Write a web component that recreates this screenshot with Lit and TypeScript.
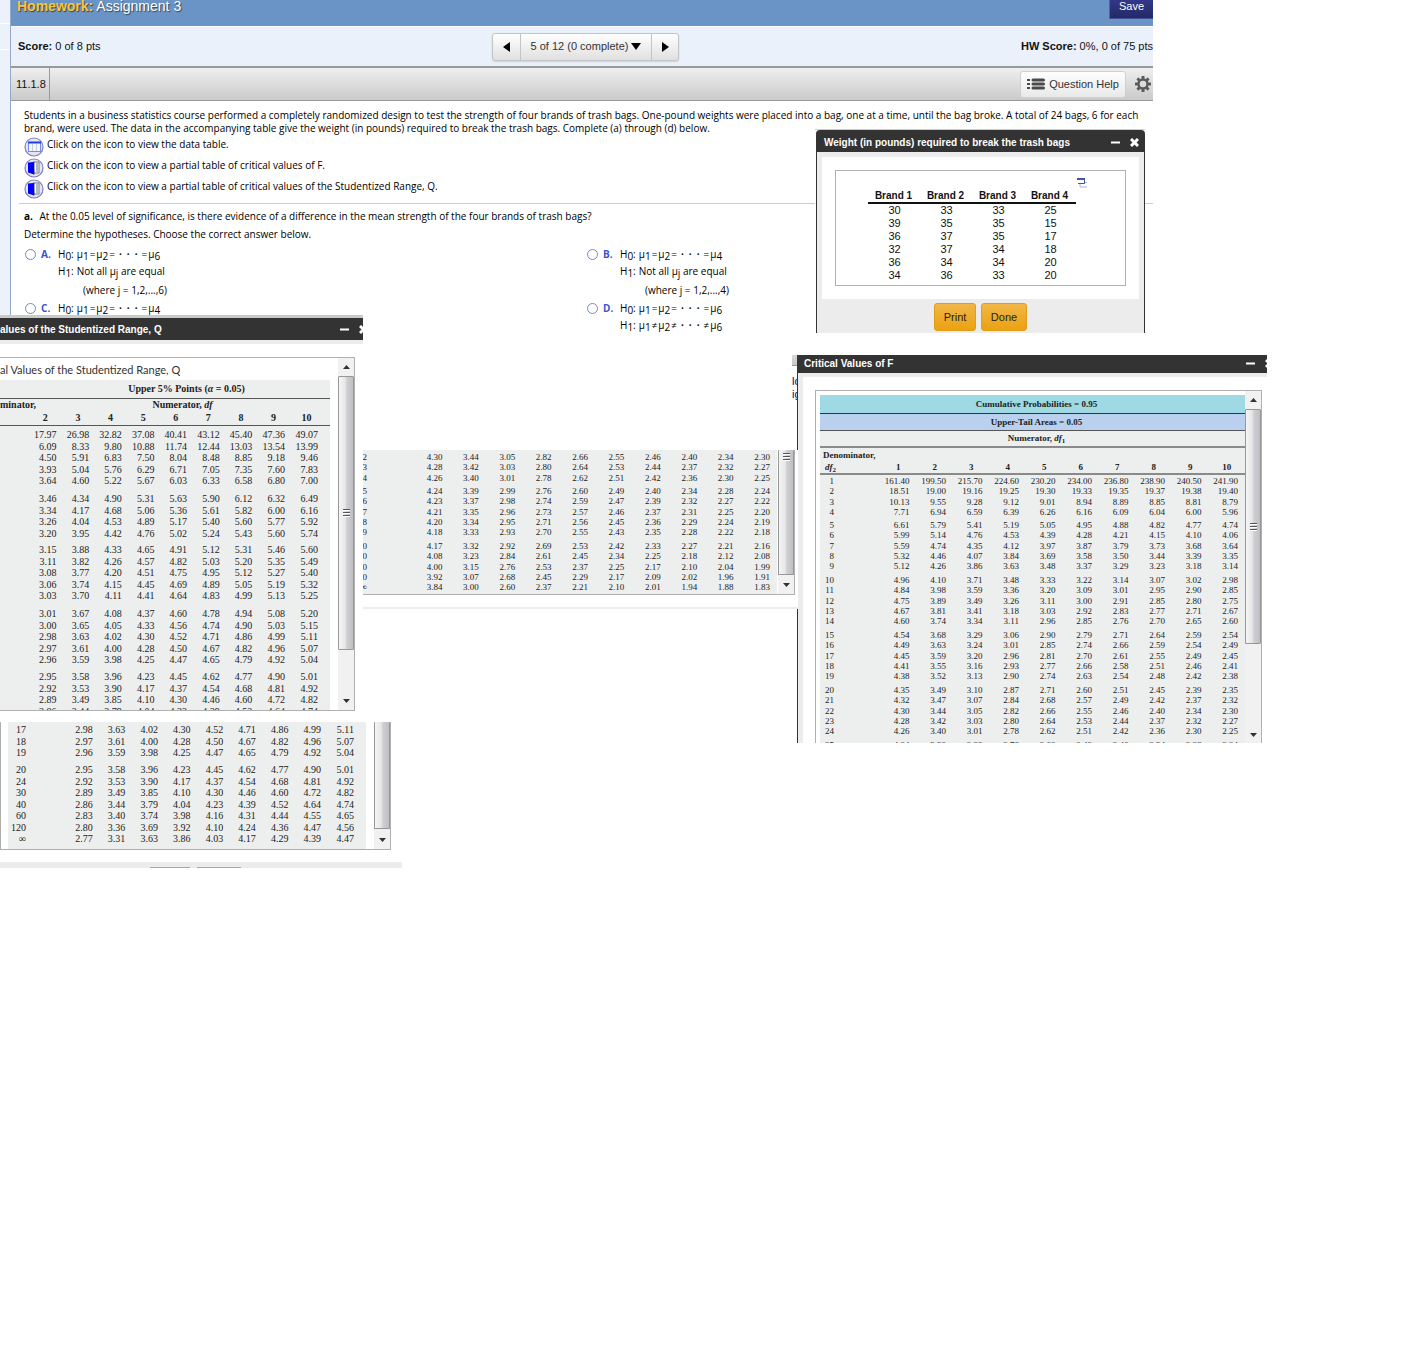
import { LitElement, html, css, svg, nothing } from "lit";
import { customElement, property } from "lit/decorators.js";

type Group = { label: string; values: string }[];

const group = (text: string): Group =>
  text
    .trim()
    .split("\n")
    .map((line) => {
      const [label, values] = line.trim().split("|");
      return { label, values };
    });

const WEIGHTS = [
  [30, 33, 33, 25],
  [39, 35, 35, 15],
  [36, 37, 35, 17],
  [32, 37, 34, 18],
  [36, 34, 34, 20],
  [34, 36, 33, 20],
];

const Q_TOP: Group[] = [
  group(`|17.97 26.98 32.82 37.08 40.41 43.12 45.40 47.36 49.07
    |6.09 8.33 9.80 10.88 11.74 12.44 13.03 13.54 13.99
    |4.50 5.91 6.83 7.50 8.04 8.48 8.85 9.18 9.46
    |3.93 5.04 5.76 6.29 6.71 7.05 7.35 7.60 7.83
    |3.64 4.60 5.22 5.67 6.03 6.33 6.58 6.80 7.00`),
  group(`|3.46 4.34 4.90 5.31 5.63 5.90 6.12 6.32 6.49
    |3.34 4.17 4.68 5.06 5.36 5.61 5.82 6.00 6.16
    |3.26 4.04 4.53 4.89 5.17 5.40 5.60 5.77 5.92
    |3.20 3.95 4.42 4.76 5.02 5.24 5.43 5.60 5.74`),
  group(`|3.15 3.88 4.33 4.65 4.91 5.12 5.31 5.46 5.60
    |3.11 3.82 4.26 4.57 4.82 5.03 5.20 5.35 5.49
    |3.08 3.77 4.20 4.51 4.75 4.95 5.12 5.27 5.40
    |3.06 3.74 4.15 4.45 4.69 4.89 5.05 5.19 5.32
    |3.03 3.70 4.11 4.41 4.64 4.83 4.99 5.13 5.25`),
  group(`|3.01 3.67 4.08 4.37 4.60 4.78 4.94 5.08 5.20
    |3.00 3.65 4.05 4.33 4.56 4.74 4.90 5.03 5.15
    |2.98 3.63 4.02 4.30 4.52 4.71 4.86 4.99 5.11
    |2.97 3.61 4.00 4.28 4.50 4.67 4.82 4.96 5.07
    |2.96 3.59 3.98 4.25 4.47 4.65 4.79 4.92 5.04`),
  group(`|2.95 3.58 3.96 4.23 4.45 4.62 4.77 4.90 5.01
    |2.92 3.53 3.90 4.17 4.37 4.54 4.68 4.81 4.92
    |2.89 3.49 3.85 4.10 4.30 4.46 4.60 4.72 4.82
    |2.86 3.44 3.79 4.04 4.23 4.39 4.52 4.64 4.74`),
];

const Q_BOTTOM: Group[] = [
  group(`17|2.98 3.63 4.02 4.30 4.52 4.71 4.86 4.99 5.11
    18|2.97 3.61 4.00 4.28 4.50 4.67 4.82 4.96 5.07
    19|2.96 3.59 3.98 4.25 4.47 4.65 4.79 4.92 5.04`),
  group(`20|2.95 3.58 3.96 4.23 4.45 4.62 4.77 4.90 5.01
    24|2.92 3.53 3.90 4.17 4.37 4.54 4.68 4.81 4.92
    30|2.89 3.49 3.85 4.10 4.30 4.46 4.60 4.72 4.82
    40|2.86 3.44 3.79 4.04 4.23 4.39 4.52 4.64 4.74
    60|2.83 3.40 3.74 3.98 4.16 4.31 4.44 4.55 4.65
    120|2.80 3.36 3.69 3.92 4.10 4.24 4.36 4.47 4.56
    ∞|2.77 3.31 3.63 3.86 4.03 4.17 4.29 4.39 4.47`),
];

const F_TOP: Group[] = [
  group(`1|161.40 199.50 215.70 224.60 230.20 234.00 236.80 238.90 240.50 241.90
    2|18.51 19.00 19.16 19.25 19.30 19.33 19.35 19.37 19.38 19.40
    3|10.13 9.55 9.28 9.12 9.01 8.94 8.89 8.85 8.81 8.79
    4|7.71 6.94 6.59 6.39 6.26 6.16 6.09 6.04 6.00 5.96`),
  group(`5|6.61 5.79 5.41 5.19 5.05 4.95 4.88 4.82 4.77 4.74
    6|5.99 5.14 4.76 4.53 4.39 4.28 4.21 4.15 4.10 4.06
    7|5.59 4.74 4.35 4.12 3.97 3.87 3.79 3.73 3.68 3.64
    8|5.32 4.46 4.07 3.84 3.69 3.58 3.50 3.44 3.39 3.35
    9|5.12 4.26 3.86 3.63 3.48 3.37 3.29 3.23 3.18 3.14`),
  group(`10|4.96 4.10 3.71 3.48 3.33 3.22 3.14 3.07 3.02 2.98
    11|4.84 3.98 3.59 3.36 3.20 3.09 3.01 2.95 2.90 2.85
    12|4.75 3.89 3.49 3.26 3.11 3.00 2.91 2.85 2.80 2.75
    13|4.67 3.81 3.41 3.18 3.03 2.92 2.83 2.77 2.71 2.67
    14|4.60 3.74 3.34 3.11 2.96 2.85 2.76 2.70 2.65 2.60`),
  group(`15|4.54 3.68 3.29 3.06 2.90 2.79 2.71 2.64 2.59 2.54
    16|4.49 3.63 3.24 3.01 2.85 2.74 2.66 2.59 2.54 2.49
    17|4.45 3.59 3.20 2.96 2.81 2.70 2.61 2.55 2.49 2.45
    18|4.41 3.55 3.16 2.93 2.77 2.66 2.58 2.51 2.46 2.41
    19|4.38 3.52 3.13 2.90 2.74 2.63 2.54 2.48 2.42 2.38`),
  group(`20|4.35 3.49 3.10 2.87 2.71 2.60 2.51 2.45 2.39 2.35
    21|4.32 3.47 3.07 2.84 2.68 2.57 2.49 2.42 2.37 2.32
    22|4.30 3.44 3.05 2.82 2.66 2.55 2.46 2.40 2.34 2.30
    23|4.28 3.42 3.03 2.80 2.64 2.53 2.44 2.37 2.32 2.27
    24|4.26 3.40 3.01 2.78 2.62 2.51 2.42 2.36 2.30 2.25`),
  group(`25|4.24 3.39 2.99 2.76 2.60 2.49 2.40 2.34 2.28 2.24`),
];

const F_BOTTOM: Group[] = [
  group(`22|4.30 3.44 3.05 2.82 2.66 2.55 2.46 2.40 2.34 2.30
    23|4.28 3.42 3.03 2.80 2.64 2.53 2.44 2.37 2.32 2.27
    24|4.26 3.40 3.01 2.78 2.62 2.51 2.42 2.36 2.30 2.25`),
  group(`25|4.24 3.39 2.99 2.76 2.60 2.49 2.40 2.34 2.28 2.24
    26|4.23 3.37 2.98 2.74 2.59 2.47 2.39 2.32 2.27 2.22
    27|4.21 3.35 2.96 2.73 2.57 2.46 2.37 2.31 2.25 2.20
    28|4.20 3.34 2.95 2.71 2.56 2.45 2.36 2.29 2.24 2.19
    29|4.18 3.33 2.93 2.70 2.55 2.43 2.35 2.28 2.22 2.18`),
  group(`30|4.17 3.32 2.92 2.69 2.53 2.42 2.33 2.27 2.21 2.16
    40|4.08 3.23 2.84 2.61 2.45 2.34 2.25 2.18 2.12 2.08
    60|4.00 3.15 2.76 2.53 2.37 2.25 2.17 2.10 2.04 1.99
    120|3.92 3.07 2.68 2.45 2.29 2.17 2.09 2.02 1.96 1.91
    ∞|3.84 3.00 2.60 2.37 2.21 2.10 2.01 1.94 1.88 1.83`),
];

/** Vertical scroll rail with arrows, thumb and grip. */
@customElement("scroll-rail")
export class ScrollRail extends LitElement {
  @property({ type: Number }) thumb = 100;
  @property() grip: "middle" | "start" | "none" = "middle";
  @property({ type: Boolean }) up = false;

  static styles = css`
    :host {
      display: flex;
      flex-direction: column;
      flex: none;
      width: 16px;
      box-sizing: border-box;
      background: #f1f1f1;
    }
    .arrow {
      display: flex;
      align-items: center;
      justify-content: center;
      flex: none;
      height: 18px;
    }
    .thumb {
      display: flex;
      justify-content: center;
      align-items: center;
      flex: none;
      box-sizing: border-box;
      border: 1px solid #979797;
      border-radius: 1px;
      background: linear-gradient(90deg, #f5f5f5 0%, #e6e6e8 45%, #d0d0d3 55%, #bfbfc3 100%);
    }
    .thumb.start {
      align-items: flex-start;
      border-top: 0;
      padding-top: 3px;
    }
    .thumb.none {
      border-top: 0;
    }
    .fill {
      flex: 1;
    }
    svg {
      display: block;
    }
  `;

  render() {
    return html`
      ${this.up
        ? html`<div class="arrow">
            <svg width="7" height="4" viewBox="0 0 7 4"><path d="M0 4 3.5 0 7 4Z" fill="#333" /></svg>
          </div>`
        : nothing}
      <div class="thumb ${this.grip}" style="height:${this.thumb}px">
        ${this.grip === "none"
          ? nothing
          : html`<svg width="7" height="8" viewBox="0 0 7 8">
              <path d="M0 .5H7M0 3.5H7M0 6.5H7" stroke="#555" />
              <path d="M0 1.5H7M0 4.5H7M0 7.5H7" stroke="#fff" />
            </svg>`}
      </div>
      <div class="fill"></div>
      <div class="arrow">
        <svg width="7" height="4" viewBox="0 0 7 4"><path d="M0 0H7L3.5 4Z" fill="#333" /></svg>
      </div>
    `;
  }
}

const tableIcon = html`<svg class="round" width="20" height="20" viewBox="0 0 20 20">
  <circle cx="10" cy="10" r="9" fill="#e6e6f2" stroke="#8080bb" stroke-width="1.2" />
  <rect x="4.5" y="5.5" width="12" height="9" fill="#f4f6ff" stroke="#6f8ff0" />
  <path d="M4 5.500H17" stroke="#1f3fe0" stroke-width="2" />
  <path d="M8.500 7V14M12.500 7V14" stroke="#ccd" />
</svg>`;

const bookIcon = html`<svg class="round" width="20" height="20" viewBox="0 0 20 20">
  <circle cx="10" cy="10" r="9" fill="#e6e6f2" stroke="#8080bb" stroke-width="1.2" />
  <path d="M9 4H15V15H10Z" fill="#fff" stroke="#778" stroke-width="1" />
  <path d="M13 5V14" stroke="#a9bccb" stroke-width="2" />
  <path d="M4 4.500 10 4V16.500L4 14.500Z" fill="#00f" />
  <path d="M10 4V16.500" stroke="#224" stroke-width=".8" />
</svg>`;

const minimize = html`<svg width="9" height="9" viewBox="0 0 9 9"><path d="M0 4.500H9" stroke="#fff" stroke-width="2" /></svg>`;
const close = html`<svg width="9" height="9" viewBox="0 0 9 9"><path d="M1 1 8 8M8 1 1 8" stroke="#fff" stroke-width="3" /></svg>`;

const gearTeeth = [0, 45, 90, 135, 180, 225, 270, 315].map(
  (a) => svg`<rect x="6.5" y="0" width="3" height="4" rx=".6" fill="#5b5b5b" transform="rotate(${a} 8 8)" />`
);

const dots = html`<span class="dots"><b>·</b><b>·</b><b>·</b></span>`;
const mu = (s: string) => html`<span>µ<sub>${s}</sub></span>`;
const h = (s: string) => html`<span class="hyp">H<sub>${s}</sub>:</span>`;

@customElement("app-root")
export class AppRoot extends LitElement {
  static styles = css`
    :host {
      display: block;
      position: relative;
      min-height: 100vh;
      overflow: hidden;
      background: #fff;
      color: #111;
      font: 11px/13px "Liberation Sans", Arial, sans-serif;
    }
    * {
      box-sizing: border-box;
    }
    button {
      font: inherit;
      color: inherit;
      margin: 0;
      padding: 0;
      border: 0;
      background: none;
    }
    svg {
      display: block;
      flex: none;
    }
    table {
      border-collapse: collapse;
      border-spacing: 0;
    }
    th,
    td {
      padding: 0;
    }

    /* assignment page */
    .page {
      display: flex;
      width: 100%;
      max-width: 1153px;
      overflow: hidden;
      white-space: nowrap;
    }
    .rail {
      flex: none;
      width: 11px;
      background: #ecf1fa;
      border-right: 1px solid #93a9cb;
    }
    .rail i {
      display: block;
      height: 24px;
      border-bottom: 1px solid #fff;
    }
    .rail i + i {
      height: 26px;
    }
    .main {
      flex: 1;
      min-width: 0;
    }
    .bar {
      display: flex;
      justify-content: space-between;
      align-items: flex-start;
      height: 27px;
      padding-left: 6px;
      background: #6a94c6;
      border-bottom: 1px solid #fff;
      color: #fff;
    }
    .bar h1 {
      margin: 0;
      font-size: 14px;
      line-height: 13px;
      font-weight: 400;
      text-shadow: 1px 1px 1px #345;
    }
    .bar h1 b {
      color: #fbc53b;
    }
    .save {
      width: 44px;
      height: 19px;
      padding-bottom: 6px;
      background: linear-gradient(#313889, #232a66);
      border-left: 1px solid #5360a8;
      border-bottom: 1px solid #4350a0;
      font-size: 11px;
      color: #fff;
    }
    .score {
      display: grid;
      grid-template-columns: 1fr auto 1fr;
      align-items: center;
      height: 39px;
      padding-left: 7px;
      background: #eaf1fb;
    }
    .score p {
      margin: 0;
    }
    .score p:last-child {
      text-align: right;
    }
    .pager {
      display: flex;
      height: 28px;
      border: 1px solid #c4c4c4;
      border-radius: 3px;
      background: linear-gradient(#fff, #e0e0e0);
      box-shadow: 0 1px 2px #0002;
      color: #333;
    }
    .pager button {
      display: flex;
      align-items: center;
      justify-content: center;
      gap: 3px;
      width: 27px;
    }
    .pager button + button {
      border-left: 1px solid #c4c4c4;
    }
    .pager .pick {
      width: 131px;
    }
    .tools {
      display: flex;
      align-items: center;
      height: 35px;
      border-top: 2px solid #999;
      border-bottom: 1px solid #999;
      background: linear-gradient(#efefef, #cacaca);
    }
    .number {
      align-self: stretch;
      width: 39px;
      padding: 10px 0 0 5px;
      border-right: 1px solid #999;
    }
    .help {
      display: flex;
      align-items: center;
      justify-content: center;
      gap: 4px;
      width: 106px;
      height: 27px;
      margin-left: auto;
      border: 1px solid #d0d0d0;
      border-radius: 3px;
      background: linear-gradient(#fefefe, #e9e9e9);
      color: #333;
    }
    .gear {
      width: 16px;
      margin: 0 2px 0 9px;
    }
    .text,
    .question,
    .choices {
      font-family: "Open Sans", "Noto Sans", sans-serif;
      font-size: 10px;
      color: #000;
    }
    .text {
      padding: 8px 0 0 13px;
    }
    .text p {
      margin: 0;
    }
    .links {
      display: flex;
      flex-direction: column;
      align-items: flex-start;
      gap: 1px;
      padding-top: 1px;
    }
    .links a {
      display: flex;
      gap: 3px;
      height: 20px;
      color: inherit;
      text-decoration: none;
      line-height: 17px;
    }
    .round {
      margin-top: 1px;
    }
    .rule {
      height: 1px;
      margin: 5px 0 6px 8px;
      background: #ccc;
    }
    .question {
      display: flex;
      flex-direction: column;
      gap: 5px;
      padding-left: 13px;
    }
    .question p {
      margin: 0;
    }
    .question p b {
      margin-right: 4px;
    }
    .choices {
      display: grid;
      grid-template-columns: 562px 1fr;
      padding: 5px 0 0 13px;
    }
    .choice {
      display: flex;
      align-items: flex-start;
      height: 54px;
      line-height: 17px;
    }
    .choice input {
      appearance: none;
      width: 11px;
      height: 11px;
      margin: 3px 5px 0 1px;
      border: 1px solid #7088d8;
      border-radius: 50%;
      background: #fff;
    }
    .choice b.key {
      width: 17px;
      color: #3a53d0;
    }
    .choice .where {
      display: block;
      padding-left: 25px;
      line-height: 20px;
    }
    .line {
      display: flex;
      gap: 1px;
    }
    .hyp {
      margin-right: 2px;
    }
    sub {
      font-size: 10px;
      line-height: 0;
      vertical-align: -2px;
    }
    .dots {
      display: inline-flex;
      gap: 5px;
      padding: 0 3px;
    }

    /* floating windows */
    .win {
      position: absolute;
      overflow: hidden;
      background: #fff;
      white-space: nowrap;
    }
    .title {
      display: flex;
      align-items: center;
      gap: 10px;
      background: #333;
      color: #fff;
      font-size: 10px;
      font-weight: 700;
    }
    .title span {
      flex: 1;
    }
    .title button {
      width: 9px;
      height: 9px;
    }

    .weights {
      left: 815px;
      top: 129px;
      width: 330px;
      height: 204px;
      border-top: 1px solid #ccc;
      padding-left: 1px;
    }
    .weights .title {
      height: 22px;
      padding: 3px 6px 0 8px;
      border-radius: 4px 4px 0 0;
    }
    .weights .body {
      display: flex;
      flex-direction: column;
      padding: 5px;
      height: 182px;
      border: solid #333;
      border-width: 0 1px;
      background: #ececec;
    }
    .sheet {
      padding: 13px;
      background: #fff;
    }
    .box {
      display: flex;
      flex-direction: column;
      align-items: center;
      height: 116px;
      padding-top: 7px;
      border: 1px solid #b0b0b0;
    }
    .popout {
      align-self: flex-end;
      margin-right: 38px;
    }
    .box table {
      width: 208px;
      margin: 1px 18px 0 0;
      table-layout: fixed;
      text-align: center;
    }
    .box thead th {
      height: 14px;
      border-bottom: 2px solid #111;
      font-size: 10px;
    }
    .box td {
      padding-left: 2px;
    }
    .actions {
      display: flex;
      justify-content: center;
      gap: 5px;
      padding: 4px 0 0 0;
    }
    .actions button {
      width: 46px;
      height: 28px;
      border: 1px solid #e29d18;
      border-radius: 3px;
      background: linear-gradient(#f2b648, #eba211);
      color: #222;
    }
    .actions button:first-child {
      width: 42px;
    }

    /* statistical tables */
    .stat {
      width: 100%;
      table-layout: fixed;
      background: #edefee;
      color: #222;
      font-family: "Liberation Serif", "Times New Roman", serif;
      text-align: right;
    }
    .stat thead th {
      text-align: center;
    }
    .q {
      font-size: 10px;
      line-height: 11px;
    }
    .q td {
      padding-right: 5px;
    }
    .q .n:last-child {
      padding-right: 7px;
    }
    .q td:last-child {
      padding-right: 12px;
    }
    .q tbody tr:nth-child(odd) {
      line-height: 12px;
    }
    .q tbody + tbody tr:first-child > * {
      padding-top: 5px;
    }
    .q tbody th {
      font-weight: 400;
      padding-right: 39px;
    }
    .f {
      font-size: 9px;
      line-height: 10px;
    }
    .f td {
      padding-right: 7px;
    }
    .f tbody tr:nth-child(3n + 2) {
      line-height: 11px;
    }
    .f tbody + tbody tr:first-child > * {
      padding-top: 3px;
    }
    .f tbody th {
      font-weight: 400;
      padding-right: 46px;
    }
    .lined > * {
      border-bottom: 1px solid #555;
    }
    .frame {
      display: flex;
      overflow: hidden;
      border: 1px solid #b0b0b0;
    }
    .pane {
      flex: 1;
      min-width: 0;
    }

    .range {
      left: 0;
      top: 315px;
      width: 363px;
      height: 400px;
      border-top: 3px solid #c9cbca;
    }
    .range .title {
      height: 22px;
      margin-right: -5px;
    }
    .edge {
      height: 4px;
      background: #ececec;
    }
    .range .frame {
      height: 354px;
      margin: 13px 8px 0 0;
      border-left: 0;
    }
    .range h2 {
      margin: 0;
      height: 22px;
      font: 400 11px/24px Lato, "Open Sans", sans-serif;
      color: #333;
    }
    .range .stat {
      width: calc(100% - 8px);
    }
    .range .top th {
      height: 18px;
      padding-left: 14px;
    }
    .range .mid th {
      height: 13px;
      padding-left: 6px;
    }
    .range .mid th:first-child {
      padding-left: 0;
      text-align: left;
    }
    .range .nums th {
      height: 14px;
    }
    .range tbody:first-of-type tr:first-child td {
      padding-top: 3px;
    }
    .range tbody:nth-of-type(even) tr:first-child td {
      padding-top: 6px;
    }

    .tail {
      left: 0;
      top: 722px;
      width: 402px;
      height: 146px;
    }
    .tail .frame {
      width: 391px;
      height: 128px;
      border-top: 0;
      padding-left: 7px;
    }
    .tail .stat {
      width: calc(100% - 8px);
    }
    .tail .pane {
      background: linear-gradient(90deg, #edefee calc(100% - 8px), #fff 0);
    }
    .tail tbody:first-of-type tr:first-child > * {
      padding-top: 2px;
    }
    .strip {
      display: flex;
      align-items: flex-end;
      gap: 7px;
      height: 6px;
      margin-top: 12px;
      padding-left: 150px;
      background: #ececec;
    }
    .strip i {
      width: 40px;
      height: 1px;
      background: #e2a32d;
    }
    .strip i + i {
      width: 44px;
    }

    .fcrit {
      left: 797px;
      top: 355px;
      width: 470px;
      height: 388px;
    }
    .fcrit .title {
      height: 18px;
      padding-left: 7px;
      padding-bottom: 2px;
      margin-right: -7px;
    }
    .fcrit .side {
      height: 370px;
      border-left: 1px solid #333;
      padding-left: 5px;
      background: linear-gradient(90deg, #ececec 5px, #fff 5px);
    }
    .fcrit .edge {
      margin-left: -5px;
    }
    .fcrit .frame {
      height: 360px;
      margin: 13px 5px 0 12px;
      padding: 4px 0 0 4px;
    }
    .fcrit scroll-rail {
      margin-top: -4px;
      height: 353px;
    }
    .fcrit .cum th {
      height: 18px;
      padding-left: 8px;
      background: #9fdae4;
      border-bottom-color: #333;
    }
    .fcrit .tailrow th {
      height: 17px;
      background: #b9d0ee;
      padding: 1px 0 0 8px;
    }
    .fcrit .num th {
      height: 17px;
      padding-left: 8px;
    }
    .fcrit .num th,
    .fcrit .cols th {
      border-bottom: 2px solid #8a8a8a;
    }
    .fcrit .den th {
      height: 12px;
      padding: 2px 0 0 3px;
      text-align: left;
    }
    .fcrit .cols th {
      height: 14px;
    }
    .fcrit .cols th:first-child {
      padding-left: 5px;
      text-align: left;
      font-style: italic;
    }
    .fcrit sub {
      font-size: 7px;
      font-style: normal;
    }
    .fcrit tbody:first-of-type tr:first-child > * {
      padding-top: 1px;
    }

    .sliver {
      left: 792px;
      top: 355px;
      width: 5px;
      height: 95px;
    }
    .sliver i {
      display: block;
      height: 11px;
      margin-bottom: 9px;
      background: linear-gradient(#d8d8d8, #c9c9c9);
      border-bottom: 1px solid #999;
    }
    .sliver span {
      display: block;
      color: #205;
    }

    .ftail {
      left: 363px;
      top: 450px;
      width: 435px;
      height: 159px;
    }
    .ftail .frame {
      justify-content: flex-end;
      width: 432px;
      height: 145px;
      border-width: 0 1px 1px 0;
    }
    .ftail .pane {
      flex: none;
      width: 424px;
      margin-right: 1px;
      background: #edefee;
    }
    .ftail .edge {
      height: 2px;
      margin-top: 12px;
    }
    .ftail tbody:first-of-type tr:first-child > * {
      padding-top: 2px;
    }
  `;

  private rows(groups: Group[], labels = true) {
    return groups.map(
      (g) => html`<tbody>
        ${g.map(
          (r) => html`<tr>
            ${labels ? html`<th scope="row">${r.label}</th>` : html`<td></td>`}
            ${r.values.split(" ").map((v) => html`<td>${v}</td>`)}
          </tr>`
        )}
      </tbody>`
    );
  }

  private cols(first: number, count: number, last?: number) {
    return html`<colgroup>
      <col style="width:${first}px" />
      ${Array.from({ length: count - 1 }, () => html`<col />`)}
      ${last ? html`<col style="width:${last}px" />` : html`<col />`}
    </colgroup>`;
  }

  private choice(key: string, body: unknown) {
    return html`<label class="choice">
      <input type="radio" name="hypotheses" value=${key} />
      <b class="key">${key}.</b>
      <span>${body}</span>
    </label>`;
  }

  private equalLine(n: string) {
    return html`<span class="line">${h("0")}${mu("1")}<span>=</span>${mu("2")}<span>=</span>${dots}<span>=</span>${mu(n)}</span>`;
  }

  private notAll(n: string) {
    return html`${this.equalLine(n)}
      <span class="line">${h("1")}<span>Not all µ<sub>j</sub> are equal</span></span>
      <span class="where">(where j = 1,2,...,${n})</span>`;
  }

  private titleBar(text: string) {
    return html`<div class="title">
      <span>${text}</span>
      <button type="button" aria-label="Minimize">${minimize}</button>
      <button type="button" aria-label="Close">${close}</button>
    </div>`;
  }

  render() {
    return html`
      <div class="page">
        <div class="rail"><i></i><i></i></div>
        <div class="main">
          <header class="bar">
            <h1><b>Homework:</b> Assignment 3</h1>
            <button type="button" class="save">Save</button>
          </header>
          <div class="score">
            <p><b>Score:</b> 0 of 8 pts</p>
            <nav class="pager">
              <button type="button" aria-label="Previous">
                <svg width="7" height="10" viewBox="0 0 7 10"><path d="M7 0V10L0 5Z" fill="#000" /></svg>
              </button>
              <button type="button" class="pick">
                5 of 12 (0 complete)
                <svg width="10" height="7" viewBox="0 0 10 7"><path d="M0 0H10L5 7Z" fill="#000" /></svg>
              </button>
              <button type="button" aria-label="Next">
                <svg width="7" height="10" viewBox="0 0 7 10"><path d="M0 0V10L7 5Z" fill="#000" /></svg>
              </button>
            </nav>
            <p><b>HW Score:</b> 0%, 0 of 75 pts</p>
          </div>
          <div class="tools">
            <span class="number">11.1.8</span>
            <button type="button" class="help">
              <svg width="18" height="12" viewBox="0 0 18 12">
                <path d="M6 2H16.500M6 6H16.500M6 10H16.500" stroke="#4a4a4a" stroke-width="3" stroke-linecap="round" />
                <path d="M0 2H3M0 6H3M0 10H3" stroke="#4a4a4a" stroke-width="2" />
              </svg>
              Question Help
            </button>
            <button type="button" class="gear" aria-label="Settings">
              <svg width="16" height="16" viewBox="0 0 16 16">
                ${gearTeeth}
                <circle cx="8" cy="8" r="4.500" fill="none" stroke="#5b5b5b" stroke-width="2.400" />
              </svg>
            </button>
          </div>
          <div class="text">
            <p>
              Students in a business statistics course performed a completely randomized design to test the strength of
              four brands of trash bags. One-pound weights were placed into a bag, one at a time, until the bag broke. A
              total of 24 bags, 6 for each<br />brand, were used. The data in the accompanying table give the weight (in
              pounds) required to break the trash bags. Complete (a) through (d) below.
            </p>
            <div class="links">
              <a href="#data">${tableIcon}Click on the icon to view the data table.</a>
              <a href="#f">${bookIcon}Click on the icon to view a partial table of critical values of F.</a>
              <a href="#q"
                >${bookIcon}Click on the icon to view a partial table of critical values of the Studentized Range, Q.</a
              >
            </div>
          </div>
          <div class="rule"></div>
          <div class="question">
            <p>
              <b>a.</b> At the 0.05 level of significance, is there evidence of a difference in the mean strength of the
              four brands of trash bags?
            </p>
            <p>Determine the hypotheses. Choose the correct answer below.</p>
          </div>
          <div class="choices">
            ${this.choice("A", this.notAll("6"))} ${this.choice("B", this.notAll("4"))}
            ${this.choice("C", this.equalLine("4"))}
            ${this.choice(
              "D",
              html`${this.equalLine("6")}<span class="line"
                  >${h("1")}${mu("1")}<span>≠</span>${mu("2")}<span>≠</span>${dots}<span>≠</span>${mu("6")}</span
                >`
            )}
          </div>
        </div>
      </div>

      <section class="win weights">
        ${this.titleBar("Weight (in pounds) required to break the trash bags")}
        <div class="body">
          <div class="sheet">
            <div class="box">
              <svg class="popout" width="10" height="10" viewBox="0 0 10 10">
                <path d="M3 5.500V9H10M8 4.500H10" fill="none" stroke="#a9b3dc" />
                <path d="M1 1H7.500V5.500H1" fill="none" stroke="#3f55a8" />
                <path d="M0 1H8" stroke="#3f55a8" stroke-width="2" />
              </svg>
              <table>
                <thead>
                  <tr>
                    ${[1, 2, 3, 4].map((n) => html`<th scope="col">Brand ${n}</th>`)}
                  </tr>
                </thead>
                <tbody>
                  ${WEIGHTS.map((r) => html`<tr>${r.map((v) => html`<td>${v}</td>`)}</tr>`)}
                </tbody>
              </table>
            </div>
          </div>
          <div class="actions">
            <button type="button">Print</button>
            <button type="button">Done</button>
          </div>
        </div>
      </section>

      <section class="win range">
        ${this.titleBar("alues of the Studentized Range, Q")}
        <div class="edge"></div>
        <div class="frame">
          <div class="pane">
            <h2>al Values of the Studentized Range, Q</h2>
            <table class="stat q">
              ${this.cols(29, 9, 40)}
              <thead>
                <tr class="top lined">
                  <th></th>
                  <th colspan="9">Upper 5% Points (<i>α</i> = 0.05)</th>
                </tr>
                <tr class="mid">
                  <th>minator,</th>
                  <th colspan="9">Numerator, <i>df</i></th>
                </tr>
                <tr class="nums lined">
                  <th></th>
                  ${[2, 3, 4, 5, 6, 7, 8, 9, 10].map((n) => html`<th class="n" scope="col">${n}</th>`)}
                </tr>
              </thead>
              ${this.rows(Q_TOP, false)}
            </table>
          </div>
          <scroll-rail up thumb="274"></scroll-rail>
        </div>
      </section>

      <section class="win tail">
        <div class="frame">
          <div class="pane">
            <table class="stat q">
              ${this.cols(57, 9, 40)} ${this.rows(Q_BOTTOM)}
            </table>
          </div>
          <scroll-rail thumb="107" grip="none"></scroll-rail>
        </div>
        <div class="strip"><i></i><i></i></div>
      </section>

      <div class="win sliver"><i></i><span>lo</span><span>ig</span></div>

      <section class="win fcrit">
        ${this.titleBar("Critical Values of F")}
        <div class="side">
          <div class="edge"></div>
          <div class="frame">
            <div class="pane">
              <table class="stat f">
                ${this.cols(60, 10)}
                <thead>
                  <tr class="cum lined">
                    <th colspan="11">Cumulative Probabilities = 0.95</th>
                  </tr>
                  <tr class="tailrow lined">
                    <th colspan="11">Upper-Tail Areas = 0.05</th>
                  </tr>
                  <tr class="num">
                    <th colspan="11">Numerator, <i>df</i><sub>1</sub></th>
                  </tr>
                  <tr class="den">
                    <th colspan="11">Denominator,</th>
                  </tr>
                  <tr class="cols">
                    <th>df<sub>2</sub></th>
                    ${[1, 2, 3, 4, 5, 6, 7, 8, 9, 10].map((n) => html`<th scope="col">${n}</th>`)}
                  </tr>
                </thead>
                ${this.rows(F_TOP)}
              </table>
            </div>
            <scroll-rail up thumb="235"></scroll-rail>
          </div>
        </div>
      </section>

      <section class="win ftail">
        <div class="frame">
          <div class="pane">
            <table class="stat f">
              ${this.cols(60, 10)} ${this.rows(F_BOTTOM)}
            </table>
          </div>
          <scroll-rail thumb="125" grip="start"></scroll-rail>
        </div>
        <div class="edge"></div>
      </section>
    `;
  }
}
